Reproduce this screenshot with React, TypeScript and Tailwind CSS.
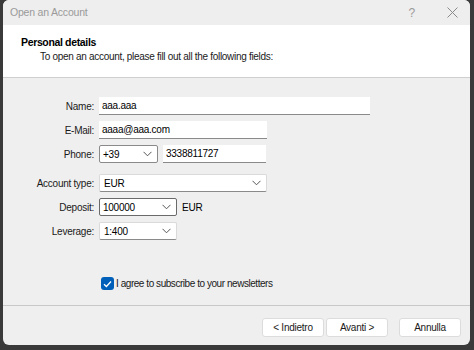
import React from "react";

const Chevron = () => (
  <svg width="9" height="6" viewBox="0 0 9 6" className="shrink-0">
    <path d="M0.5 0.8 L4.5 4.8 L8.5 0.8" fill="none" stroke="#555" strokeWidth="1" />
  </svg>
);

const Row = ({ label, children, className = "" }: { label: string; children: React.ReactNode; className?: string }) => (
  <div className={"flex items-center " + className}>
    <div className="w-[96px] text-right pr-[5px] text-[#1a1a1a]">{label}</div>
    {children}
  </div>
);

export default function App() {
  return (
    <div className="w-[474px] h-[350px] bg-[#3a3a3a] relative overflow-hidden" style={{ fontFamily: '"Liberation Sans", Arial, sans-serif' }}>
      <div className="absolute left-[3px] top-0 w-[467px] h-[345px] bg-[#efefef] rounded-[6px] overflow-hidden flex flex-col text-[10px] tracking-[-0.25px]">
        {/* Title bar */}
        <div className="h-[25px] bg-[#eeeeee] flex items-center pl-[7px] pr-[12px] text-[#9a9a9a] text-[10.5px] tracking-[-0.2px]">
          <span>Open an Account</span>
          <span className="ml-auto mr-[32px] text-[12px]">?</span>
          <svg width="11" height="11" viewBox="0 0 11 11">
            <path d="M0.5 0.5 L10.5 10.5 M10.5 0.5 L0.5 10.5" stroke="#8a8a8a" strokeWidth="1" />
          </svg>
        </div>
        {/* Header */}
        <div className="h-[53px] bg-white border-b border-[#cfcfcf] pl-[18px] pt-[10px]">
          <div className="font-bold text-[#000] text-[10.5px] tracking-[-0.35px] leading-[14px]">Personal details</div>
          <div className="pl-[19px] text-[#1a1a1a] leading-[14px] mt-[1px] tracking-[-0.3px]">To open an account, please fill out all the following fields:</div>
        </div>
        {/* Body */}
        <div className="flex-1 flex flex-col pt-[19px]">
          <Row label="Name:">
            <div className="w-[271px] h-[18px] bg-white border-b border-[#8a8a8a] pl-[3px] flex items-center">aaa.aaa</div>
          </Row>
          <Row label="E-Mail:" className="mt-[6px]">
            <div className="w-[168px] h-[18px] bg-white border-b border-[#8a8a8a] pl-[3px] flex items-center">aaaa@aaa.com</div>
          </Row>
          <Row label="Phone:" className="mt-[6px]">
            <div className="w-[59px] h-[18px] bg-white border border-[#8a8a8a] rounded-[2px] pl-[3px] pr-[5px] flex items-center justify-between">
              <span>+39</span>
              <Chevron />
            </div>
            <div className="ml-[5px] w-[103px] h-[18px] bg-white border-b border-[#8a8a8a] pl-[3px] flex items-center">3338811727</div>
          </Row>
          <Row label="Account type:" className="mt-[11px]">
            <div className="w-[168px] h-[18px] bg-white border border-[#dadada] border-b-[#8a8a8a] rounded-[2px] pl-[4px] pr-[5px] flex items-center justify-between">
              <span>EUR</span>
              <Chevron />
            </div>
          </Row>
          <Row label="Deposit:" className="mt-[6px]">
            <div className="w-[78px] h-[18px] bg-white border border-[#6a6a6a] rounded-[2px] pl-[3px] pr-[5px] flex items-center justify-between">
              <span>100000</span>
              <Chevron />
            </div>
            <span className="ml-[5px]">EUR</span>
          </Row>
          <Row label="Leverage:" className="mt-[6px]">
            <div className="w-[78px] h-[18px] bg-white border border-[#dadada] border-b-[#8a8a8a] rounded-[2px] pl-[4px] pr-[5px] flex items-center justify-between">
              <span>1:400</span>
              <Chevron />
            </div>
          </Row>
          <div className="flex items-center mt-[36px] pl-[98px]">
            <div className="w-[13px] h-[13px] rounded-[3px] bg-[#005fb8] flex items-center justify-center">
              <svg width="9" height="8" viewBox="0 0 9 8">
                <path d="M1 4.2 L3.4 6.5 L8 1.5" fill="none" stroke="white" strokeWidth="1.3" />
              </svg>
            </div>
            <span className="ml-[2px] text-[#1a1a1a] tracking-[-0.45px]">I agree to subscribe to your newsletters</span>
          </div>
        </div>
        {/* Footer */}
        <div className="h-[40px] border-t border-[#c8c8c8] flex items-start pt-[12px] pl-[259px]">
          <button className="w-[62px] h-[19px] bg-white border border-[#dcdcdc] rounded-[3px] text-[#1a1a1a]">&lt; Indietro</button>
          <button className="ml-[2px] w-[62px] h-[19px] bg-white border border-[#dcdcdc] rounded-[3px] text-[#1a1a1a]">Avanti &gt;</button>
          <button className="ml-[11px] w-[62px] h-[19px] bg-white border border-[#dcdcdc] rounded-[3px] text-[#1a1a1a]">Annulla</button>
        </div>
      </div>
    </div>
  );
}
